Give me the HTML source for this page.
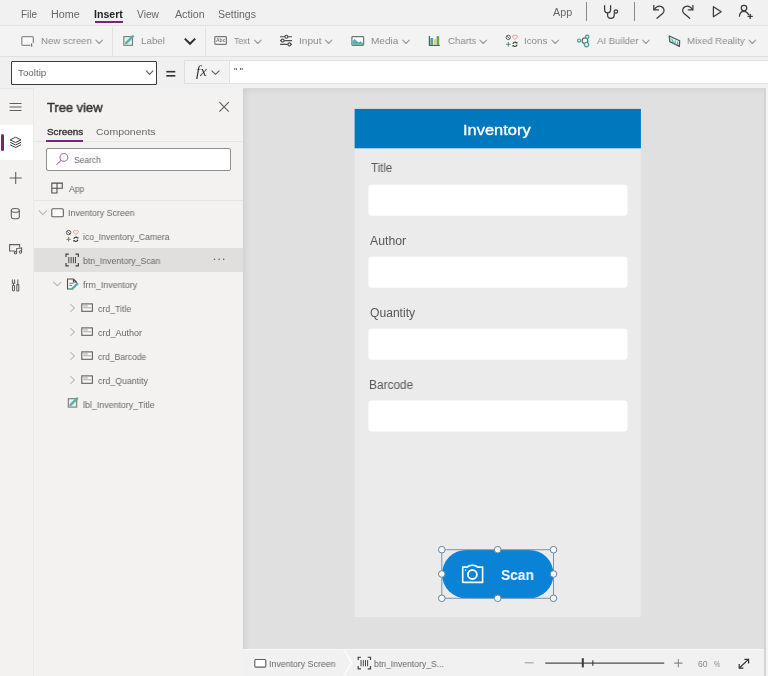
<!DOCTYPE html>
<html><head><meta charset="utf-8"><title>Power Apps Studio</title>
<style>
*{box-sizing:border-box;margin:0;padding:0}
html,body{width:768px;height:676px;overflow:hidden;background:#f3f2f1;font-family:"Liberation Sans",sans-serif;color:#605e5c}
.a{position:absolute}
.t{position:absolute;white-space:nowrap;line-height:1;transform-origin:0 0;will-change:transform}
svg{position:absolute;left:0;top:0;overflow:visible}
</style></head><body>
<div class="a" style="left:0;top:0;width:768px;height:25px;background:#f1f1f1"></div>
<div class="a" style="left:0;top:25px;width:768px;height:1px;background:#e2e2e2"></div>
<div class="a" style="left:0;top:26px;width:768px;height:30px;background:#f3f3f3"></div>
<div class="a" style="left:0;top:56px;width:768px;height:1px;background:#e0e0e0"></div>
<div class="a" style="left:0;top:57px;width:768px;height:31px;background:#f0f0f0"></div>
<div class="a" style="left:112px;top:27px;width:1px;height:29px;background:#e2e2e2"></div>
<div class="a" style="left:205px;top:27px;width:1px;height:29px;background:#e2e2e2"></div>
<div class="a" style="left:586px;top:2px;width:1px;height:19px;background:#8a8886"></div>
<div class="a" style="left:634px;top:2px;width:1px;height:19px;background:#8a8886"></div>
<div class="a" style="left:94.5px;top:21px;width:28.5px;height:2px;background:#742774"></div>
<!-- formula bar -->
<div class="a" style="left:11px;top:61px;width:146px;height:24px;background:#fff;border:1px solid #3b3a39;border-radius:1px"></div>
<div class="a" style="left:184px;top:60px;width:584px;height:24px;background:#fff;border-top:1px solid #e1dfdd;border-bottom:1px solid #e6e5e3"></div>
<div class="a" style="left:184px;top:60px;width:46px;height:24px;background:#f3f3f3;border:1px solid #e1dfdd"></div>
<div class="t" style="left:196px;top:63.5px;font-family:'Liberation Serif',serif;font-style:italic;font-size:15px;color:#323130">fx</div>
<div class="t" style="left:234.3px;top:66.5px;font-size:9px;color:#323130;letter-spacing:2.6px">""</div>
<!-- rail + tree -->
<div class="a" style="left:0;top:88px;width:33px;height:588px;background:#f3f2f1"></div>
<div class="a" style="left:0;top:88px;width:243px;height:1px;background:#e9e8e7"></div><div class="a" style="left:33px;top:89px;width:1px;height:587px;background:#eceae9"></div>
<div class="a" style="left:0;top:125px;width:33px;height:35px;background:#fff"></div>
<div class="a" style="left:1px;top:133.5px;width:3px;height:17px;background:#742774;border-radius:1.5px"></div>
<div class="a" style="left:34px;top:88px;width:209px;height:588px;background:#f3f2f1"></div>
<div class="a" style="left:34px;top:141px;width:209px;height:1px;background:#e6e5e3"></div>
<div class="a" style="left:46px;top:139.5px;width:37px;height:2px;background:#742774"></div>
<div class="a" style="left:46px;top:148px;width:185px;height:23px;background:#fff;border:1px solid #918f8d;border-radius:2px"></div>
<div class="a" style="left:34px;top:200px;width:209px;height:1px;background:#e6e5e3"></div>
<div class="a" style="left:34px;top:248px;width:209px;height:24px;background:#e1dfdd"></div>
<!-- canvas -->
<div class="a" style="left:243px;top:88px;width:521px;height:561px;background:#e0e0e0;box-shadow:inset 5px 5px 7px -4px rgba(0,0,0,0.10)"></div>
<div class="a" style="left:243px;top:88px;width:521px;height:1px;background:#d8d8d8"></div>
<div class="a" style="left:764px;top:88px;width:2px;height:588px;background:#d4d4d4"></div>
<div class="a" style="left:766px;top:88px;width:2px;height:588px;background:#f4f4f4"></div>
<div class="a" style="left:243px;top:649px;width:521px;height:27px;background:#f1f1f1;border-top:1px solid #f8f8f8"></div>
<svg width="768" height="676" viewBox="0 0 768 676">
<g fill="none" stroke="#3b3a39" stroke-width="1.25" stroke-linecap="round" stroke-linejoin="round">
<path d="M604.6 5.6 V9.6 A3 3.3 0 0 0 610.6 9.6 V5.6"/><path d="M607.6 13 V15 A3.3 3.3 0 0 0 614.2 15 V13.4"/><circle cx="615.9" cy="11.5" r="1.7"/>
<path d="M653.8 5.3 V9.9 H658.4"/><path d="M654.2 9.5 C656 7 659 5.6 661.5 6.6 C664.6 8 664.8 11.6 662.6 13.6 L657 18.3"/>
<path d="M692.9 5.3 V9.9 H688.3"/><path d="M692.5 9.5 C690.7 7 687.7 5.6 685.2 6.6 C682.1 8 681.9 11.6 684.1 13.6 L689.7 18.3"/>
<path d="M713.4 6.7 V16.8 L721.2 11.75 Z"/>
<circle cx="744" cy="8.1" r="2.75"/><path d="M739.4 16.2 C739.8 12.8 742 11.4 744 11.4 C746 11.4 747.6 12.6 748.6 14.6"/><path d="M748.2 16.4 H752.2 M750.2 14.4 V18.4" stroke-width="1.4"/>
</g>
<path d="M30.4 45.35 H22.9 A1.1 1.1 0 0 1 21.8 44.25 V37.75 A1.1 1.1 0 0 1 22.9 36.65 H32.2 A1.1 1.1 0 0 1 33.3 37.75 V43" fill="#fafafa" stroke="#8e8c8a" stroke-width="1.25"/>
<path d="M31.6 43.4 V46.6" stroke="#5d7a68" stroke-width="1.3"/>
<rect x="123.8" y="36.6" width="8.7" height="8.7" fill="#dff3f1" stroke="#7a7876" stroke-width="1.1"/><path d="M125.6 43.599999999999994 L133.6 35.7" stroke="#5aaea6" stroke-width="2.4" stroke-linecap="butt"/><path d="M124.89999999999999 44.3 L126.89999999999999 43.599999999999994 L125.6 42.3 Z" fill="#5aaea6"/>
<path d="M184.8 38.6 L190 43.8 L195.2 38.6" fill="none" stroke="#323130" stroke-width="2"/>
<rect x="214.8" y="36.6" width="11.6" height="7.8" rx="0.8" fill="#f6f6f6" stroke="#7a7876" stroke-width="1.2"/>
<g stroke="#4f4d4b" stroke-width="1.1" fill="#f3f2f1"><path d="M280 36.7 H292 M280 40.6 H292 M280 44.4 H292"/><circle cx="286.4" cy="36.7" r="1.5"/><circle cx="282.6" cy="40.6" r="1.5"/><circle cx="289.4" cy="44.4" r="1.5"/></g>
<rect x="351.9" y="36.6" width="11.7" height="8.8" rx="0.8" fill="#fbffff" stroke="#767472" stroke-width="1.2"/>
<path d="M352.5 41 L354.6 38.9 L358.6 42.4 L360.6 41.2 L363 43.2 V44.8 H352.5 Z" fill="#52b5aa"/>
<rect x="430.4" y="38" width="2.7" height="7.2" fill="#5b9fa0"/><rect x="433.9" y="39.4" width="2.1" height="5.8" fill="#d9cf85"/><rect x="436.6" y="36.2" width="2.6" height="9" fill="#6aa652"/>
<path d="M429.4 35.9 V45.5 H439.8" fill="none" stroke="#45605f" stroke-width="1.2"/>
<circle cx="508.3" cy="37.4" r="2.2" fill="none" stroke="#5a5856" stroke-width="0.95"/><path d="M506.90000000000003 36.0 L509.7 38.8" stroke="#5a5856" stroke-width="0.9"/><path d="M515 39.5 L512.6 37.1 A1.3 1.3 0 0 1 515 36.0 A1.3 1.3 0 0 1 517.4 37.1 Z" fill="none" stroke="#e49a8e" stroke-width="0.95"/><path d="M506.0 44.3 H510.6 M508.3 42.0 V46.599999999999994" stroke="#5f8a62" stroke-width="1"/><path d="M513 44.0 A2 2 0 0 1 516.6 43.0 M517 44.599999999999994 A2 2 0 0 1 513.4 45.599999999999994" fill="none" stroke="#3b3a39" stroke-width="1.1"/><path d="M517.5 41.699999999999996 V43.599999999999994 H515.6 Z M512.5 46.9 V45.0 H514.4 Z" fill="#3b3a39"/>
<g fill="none" stroke-width="1.2"><circle cx="585" cy="40.7" r="2.8" stroke="#66686a" fill="#f3f2f1"/><circle cx="579.1" cy="40.6" r="1.6" stroke="#4a9d95"/><circle cx="587.2" cy="36.8" r="1.7" stroke="#4a9d95" fill="#cfeeea"/><circle cx="586.5" cy="44.6" r="2.2" stroke="#4a9d95" fill="#d4f5f1"/></g>
<path d="M669.3 36 L679.7 40.8 L679.4 46.4 L669.8 41.6 Z" fill="#dff6f4" stroke="#44545b" stroke-width="1.2" stroke-linejoin="round"/>
<path d="M671.6 38.8 C672.4 40.6 673 42 673.8 43.4 M675.4 40.4 C674.8 42 675 43.6 676 44.6 M677.6 41.4 V45.2" fill="none" stroke="#58aaa2" stroke-width="1.1"/>
<path d="M95.9 40.2 L99.15 43.5 L102.4 40.2" fill="none" stroke="#9a9896" stroke-width="1.1" stroke-linecap="round" stroke-linejoin="round"/>
<path d="M254.6 40.2 L257.85 43.5 L261.1 40.2" fill="none" stroke="#9a9896" stroke-width="1.1" stroke-linecap="round" stroke-linejoin="round"/>
<path d="M325.4 40.2 L328.65 43.5 L331.9 40.2" fill="none" stroke="#9a9896" stroke-width="1.1" stroke-linecap="round" stroke-linejoin="round"/>
<path d="M402.7 40.2 L406.0 43.5 L409.3 40.2" fill="none" stroke="#9a9896" stroke-width="1.1" stroke-linecap="round" stroke-linejoin="round"/>
<path d="M479.9 40.2 L483.2 43.5 L486.5 40.2" fill="none" stroke="#9a9896" stroke-width="1.1" stroke-linecap="round" stroke-linejoin="round"/>
<path d="M551.9 40.2 L555.2 43.5 L558.5 40.2" fill="none" stroke="#9a9896" stroke-width="1.1" stroke-linecap="round" stroke-linejoin="round"/>
<path d="M642.6 40.2 L645.9000000000001 43.5 L649.2 40.2" fill="none" stroke="#9a9896" stroke-width="1.1" stroke-linecap="round" stroke-linejoin="round"/>
<path d="M749.1 40.2 L752.35 43.5 L755.6 40.2" fill="none" stroke="#9a9896" stroke-width="1.1" stroke-linecap="round" stroke-linejoin="round"/>
<path d="M146.3 70.9 L149.60000000000002 74.4 L152.9 70.9" fill="none" stroke="#605e5c" stroke-width="1.1" stroke-linecap="round" stroke-linejoin="round"/>
<rect x="166.3" y="70.9" width="9" height="1.6" fill="#323130"/><rect x="166.3" y="75" width="9" height="1.6" fill="#323130"/>
<path d="M211.9 70.9 L215.5 74.3 L219.1 70.9" fill="none" stroke="#605e5c" stroke-width="1.1" stroke-linecap="round" stroke-linejoin="round"/>
<path d="M9.6 103.5 H21.5 M9.6 107 H21.5 M9.6 110.5 H21.5" stroke="#605e5c" stroke-width="1.1"/>
<g fill="none" stroke="#3b3a39" stroke-width="1" stroke-linejoin="round"><path d="M15.6 137.2 L21 139.9 L15.6 142.6 L10.2 139.9 Z" fill="#fff"/><path d="M10.2 142.3 L15.6 145 L21 142.3"/><path d="M10.2 144.8 L15.6 147.5 L21 144.8"/></g>
<path d="M9.6 178 H21.8 M15.7 171.9 V184.1" stroke="#605e5c" stroke-width="1.1"/>
<g fill="none" stroke="#605e5c" stroke-width="1.05"><path d="M11.3 210.4 V217 C11.3 219.4 19.3 219.4 19.3 217 V210.4"/><ellipse cx="15.3" cy="210.4" rx="4" ry="1.8"/></g>
<g fill="none" stroke="#605e5c" stroke-width="1.05"><path d="M15 251 H9.6 V244.6 H19.6 V247.6"/><path d="M16.6 252.6 V248.6 L21.6 247.9 V251.8"/><circle cx="15.5" cy="252.8" r="1.2"/><circle cx="20.5" cy="252" r="1.2"/></g>
<g fill="none" stroke="#605e5c" stroke-width="1.05"><path d="M12.4 279.6 V283.2 H14.6 V279.6 M13.5 283.2 V285.2"/><rect x="12.5" y="285.2" width="2" height="5.8" rx="0.9"/><path d="M17.8 279.4 V284.6"/><rect x="16.8" y="284.6" width="2" height="6.4" rx="0.5"/></g>
<path d="M219.4 102.2 L228.8 111.6 M228.8 102.2 L219.4 111.6" stroke="#605e5c" stroke-width="1.1"/>
<g fill="none" stroke="#a877ae" stroke-width="1.15"><circle cx="63.9" cy="157.4" r="3.9"/><path d="M61.1 160.3 L56.5 164.6"/></g>
<path d="M51.8 183.1 H62.3 V188.2 H57 V193 H51.8 Z M57 183.1 V188.2 M51.8 188.2 H57" fill="none" stroke="#4f4d4b" stroke-width="1.05"/>
<path d="M39.2 210.9 L42.8 214.6 L46.4 210.9" fill="none" stroke="#b8b6b4" stroke-width="1.1" stroke-linecap="round" stroke-linejoin="round"/>
<rect x="51.8" y="208.8" width="11.5" height="8" rx="1" fill="#fff" stroke="#605e5c" stroke-width="1.1"/>
<circle cx="68.6" cy="232.6" r="2.2" fill="none" stroke="#5a5856" stroke-width="0.95"/><path d="M67.19999999999999 231.2 L70.0 234.0" stroke="#5a5856" stroke-width="0.9"/><path d="M75.9 234.7 L73.5 232.29999999999998 A1.3 1.3 0 0 1 75.9 231.2 A1.3 1.3 0 0 1 78.30000000000001 232.29999999999998 Z" fill="none" stroke="#e49a8e" stroke-width="0.95"/><path d="M66.3 239.3 H70.89999999999999 M68.6 237.0 V241.60000000000002" stroke="#5f8a62" stroke-width="1"/><path d="M73.9 239.0 A2 2 0 0 1 77.5 238.0 M77.9 239.60000000000002 A2 2 0 0 1 74.30000000000001 240.60000000000002" fill="none" stroke="#3b3a39" stroke-width="1.1"/><path d="M78.4 236.70000000000002 V238.60000000000002 H76.5 Z M73.4 241.9 V240.0 H75.30000000000001 Z" fill="#3b3a39"/>
<g fill="none" stroke="#403e3c" stroke-width="1.15"><path d="M68.8 254.1 H66 V256.9 M75.5 254.1 H78.3 V256.9 M66 263.0 V265.8 H68.8 M78.3 263.0 V265.8 H75.5"/></g><rect x="68.35" y="257.00" width="0.95" height="6.2" fill="#403e3c"/><rect x="70.65" y="257.00" width="0.95" height="6.2" fill="#403e3c"/><rect x="72.85" y="257.00" width="0.95" height="6.2" fill="#403e3c"/><rect x="74.95" y="257.00" width="0.95" height="6.2" fill="#403e3c"/>
<path d="M53.5 282.1 L57.25 285.7 L61 282.1" fill="none" stroke="#bdbbb9" stroke-width="1.2" stroke-linecap="round" stroke-linejoin="round"/>
<path d="M73.4 278.9 H67.5 V289 H72 M73.4 278.9 L76.4 282 V283.6 M73.4 278.9 V282 H76.4" fill="none" stroke="#4f4d4b" stroke-width="1.05"/>
<path d="M69.3 283.4 H73.4 M69.3 285.5 H72" stroke="#7a7876" stroke-width="0.9"/>
<path d="M71.6 289.4 L78 283.2" stroke="#4db0a8" stroke-width="2.2"/>
<path d="M70.6 304.4 L74.4 308.0 L70.6 311.6" fill="none" stroke="#c2c0be" stroke-width="1.2" stroke-linecap="round" stroke-linejoin="round"/>
<rect x="81.8" y="303.90000000000003" width="10.6" height="7.4" fill="#f8f8f8" stroke="#605e5c" stroke-width="1.1"/><path d="M83.2 305.90000000000003 H87.7" stroke="#a19f9d" stroke-width="0.9"/><path d="M83.2 307.8 H91.2" stroke="#a19f9d" stroke-width="0.9"/>
<path d="M70.6 328.4 L74.4 332.0 L70.6 335.6" fill="none" stroke="#c2c0be" stroke-width="1.2" stroke-linecap="round" stroke-linejoin="round"/>
<rect x="81.8" y="327.90000000000003" width="10.6" height="7.4" fill="#f8f8f8" stroke="#605e5c" stroke-width="1.1"/><path d="M83.2 329.90000000000003 H87.7" stroke="#a19f9d" stroke-width="0.9"/><path d="M83.2 331.8 H91.2" stroke="#a19f9d" stroke-width="0.9"/>
<path d="M70.6 352.4 L74.4 356.0 L70.6 359.6" fill="none" stroke="#c2c0be" stroke-width="1.2" stroke-linecap="round" stroke-linejoin="round"/>
<rect x="81.8" y="351.90000000000003" width="10.6" height="7.4" fill="#f8f8f8" stroke="#605e5c" stroke-width="1.1"/><path d="M83.2 353.90000000000003 H87.7" stroke="#a19f9d" stroke-width="0.9"/><path d="M83.2 355.8 H91.2" stroke="#a19f9d" stroke-width="0.9"/>
<path d="M70.6 376.4 L74.4 380.0 L70.6 383.6" fill="none" stroke="#c2c0be" stroke-width="1.2" stroke-linecap="round" stroke-linejoin="round"/>
<rect x="81.8" y="375.90000000000003" width="10.6" height="7.4" fill="#f8f8f8" stroke="#605e5c" stroke-width="1.1"/><path d="M83.2 377.90000000000003 H87.7" stroke="#a19f9d" stroke-width="0.9"/><path d="M83.2 379.8 H91.2" stroke="#a19f9d" stroke-width="0.9"/>
<rect x="68.3" y="398.7" width="8.4" height="8.4" fill="#dff3f1" stroke="#7a7876" stroke-width="1.1"/><path d="M70.1 405.4 L77.8 397.8" stroke="#5aaea6" stroke-width="2.4" stroke-linecap="butt"/><path d="M69.39999999999999 406.09999999999997 L71.39999999999999 405.4 L70.1 404.09999999999997 Z" fill="#5aaea6"/>
<circle cx="214.5" cy="259.3" r="0.8" fill="#605e5c"/>
<circle cx="219.1" cy="259.3" r="0.8" fill="#605e5c"/>
<circle cx="223.7" cy="259.3" r="0.8" fill="#605e5c"/>
<rect x="354.6" y="108.9" width="286.3" height="508.1" fill="#ebebeb"/>
<rect x="354.6" y="108.9" width="286.3" height="39.4" fill="#0078be"/>
<rect x="368.5" y="184.8" width="259" height="30.9" rx="3" fill="#fff"/>
<rect x="368.5" y="256.8" width="259" height="30.9" rx="3" fill="#fff"/>
<rect x="368.5" y="328.8" width="259" height="30.9" rx="3" fill="#fff"/>
<rect x="368.5" y="400.6" width="259" height="30.9" rx="3" fill="#fff"/>
<rect x="442" y="550" width="111.5" height="48.3" rx="24.15" fill="#0a83d7"/>
<g fill="none" stroke="#fff" stroke-width="1.6" stroke-linejoin="round"><path d="M462.7 582.4 V567.1 H467.4 C468.6 565.2 470 565.2 472.4 565.2 C474.8 565.2 476.2 565.2 477.4 567.1 H482.6 V582.4 Z"/><circle cx="472.4" cy="574.5" r="4.5" stroke-width="1.8"/></g><circle cx="465.6" cy="570.1" r="0.8" fill="#fff"/>
<rect x="441.8" y="549.7" width="111.7" height="48.6" fill="none" stroke="#7d93ab" stroke-width="1"/>
<circle cx="441.8" cy="549.7" r="3.3" fill="#f4fdff" stroke="#6b8199" stroke-width="1"/>
<circle cx="497.7" cy="549.7" r="3.3" fill="#f4fdff" stroke="#6b8199" stroke-width="1"/>
<circle cx="553.5" cy="549.7" r="3.3" fill="#f4fdff" stroke="#6b8199" stroke-width="1"/>
<circle cx="441.8" cy="574" r="3.3" fill="#f4fdff" stroke="#6b8199" stroke-width="1"/>
<circle cx="553.5" cy="574" r="3.3" fill="#f4fdff" stroke="#6b8199" stroke-width="1"/>
<circle cx="441.8" cy="598.3" r="3.3" fill="#f4fdff" stroke="#6b8199" stroke-width="1"/>
<circle cx="497.7" cy="598.3" r="3.3" fill="#f4fdff" stroke="#6b8199" stroke-width="1"/>
<circle cx="553.5" cy="598.3" r="3.3" fill="#f4fdff" stroke="#6b8199" stroke-width="1"/>
<rect x="254.8" y="659.5" width="11" height="7.6" rx="1" fill="#fff" stroke="#605e5c" stroke-width="1.1"/>
<path d="M343.8 649.5 L351.6 662.6 L343.8 676" fill="none" stroke="#fbfbfb" stroke-width="1.6"/>
<g fill="none" stroke="#403e3c" stroke-width="1.15"><path d="M361.0 657.2 H358.2 V660.0 M367.7 657.2 H370.5 V660.0 M358.2 666.1000000000001 V668.9000000000001 H361.0 M370.5 666.1000000000001 V668.9000000000001 H367.7"/></g><rect x="360.55" y="660.10" width="0.95" height="6.2" fill="#403e3c"/><rect x="362.85" y="660.10" width="0.95" height="6.2" fill="#403e3c"/><rect x="365.05" y="660.10" width="0.95" height="6.2" fill="#403e3c"/><rect x="367.15" y="660.10" width="0.95" height="6.2" fill="#403e3c"/>
<path d="M524.7 662.8 H533.7" stroke="#a19f9d" stroke-width="1.1"/>
<path d="M545.3 663.2 H664.2" stroke="#4f4d4b" stroke-width="1.3"/>
<rect x="581.8" y="658.2" width="2" height="9.2" fill="#3b3a39"/><rect x="592.3" y="660.3" width="1.1" height="5.5" fill="#3b3a39"/>
<path d="M674.2 663.1 H682.5 M678.35 659 V667.3" stroke="#8a8886" stroke-width="1.1"/>
<g stroke="#323130" stroke-width="1.2" fill="none"><path d="M739.6 667.8 L748.2 659.6"/><path d="M744.4 659.3 H748.6 V663.5"/><path d="M739.2 664 V668.2 H743.4"/></g>
</svg>
<div class="t" style="left:216.3px;top:38.1px;font-size:5px;font-weight:bold;color:#7a7876;transform:scaleX(0.95)">Abc</div>
<div class="t" style="left:20.55px;top:10px;font-size:10px;color:#696765;transform:scaleX(1.0000);">File</div>
<div class="t" style="left:50.89px;top:10px;font-size:10px;color:#696765;transform:scaleX(1.0784);">Home</div>
<div class="t" style="left:93.91px;top:10px;font-size:10px;font-weight:bold;color:#252423;transform:scaleX(1.0590);">Insert</div>
<div class="t" style="left:137.24px;top:10px;font-size:10px;color:#696765;transform:scaleX(1.0212);">View</div>
<div class="t" style="left:174.70px;top:10px;font-size:10px;color:#696765;transform:scaleX(1.0679);">Action</div>
<div class="t" style="left:218.28px;top:10px;font-size:10px;color:#696765;transform:scaleX(1.0496);">Settings</div>
<div class="t" style="left:552.50px;top:8px;font-size:10px;color:#696765;transform:scaleX(1.0743);">App</div>
<div class="t" style="left:40.96px;top:36px;font-size:9.8px;color:#8d8b89;transform:scaleX(0.9851);">New screen</div>
<div class="t" style="left:141.25px;top:36px;font-size:9.8px;color:#8d8b89;transform:scaleX(1.0000);">Label</div>
<div class="t" style="left:234.48px;top:36px;font-size:9.8px;color:#8d8b89;transform:scaleX(0.8789);">Text</div>
<div class="t" style="left:299.27px;top:36px;font-size:9.8px;color:#8d8b89;transform:scaleX(1.0313);">Input</div>
<div class="t" style="left:370.93px;top:36px;font-size:9.8px;color:#8d8b89;transform:scaleX(1.0231);">Media</div>
<div class="t" style="left:447.51px;top:36px;font-size:9.8px;color:#8d8b89;transform:scaleX(0.9821);">Charts</div>
<div class="t" style="left:524.31px;top:36px;font-size:9.8px;color:#8d8b89;transform:scaleX(0.9864);">Icons</div>
<div class="t" style="left:597.00px;top:36px;font-size:9.8px;color:#8d8b89;transform:scaleX(0.9775);">AI Builder</div>
<div class="t" style="left:687.27px;top:36px;font-size:9.8px;color:#8d8b89;transform:scaleX(0.9776);">Mixed Reality</div>
<div class="t" style="left:18.24px;top:68px;font-size:9.5px;color:#696765;transform:scaleX(1.0280);">Tooltip</div>
<div class="t" style="left:46.76px;top:101px;font-size:13.2px;color:#323130;transform:scaleX(0.9788);-webkit-text-stroke:0.45px #323130;">Tree view</div>
<div class="t" style="left:46.50px;top:127px;font-size:9.8px;color:#323130;transform:scaleX(1.0086);-webkit-text-stroke:0.35px #323130;">Screens</div>
<div class="t" style="left:96.46px;top:127px;font-size:9.8px;color:#696765;transform:scaleX(1.0721);">Components</div>
<div class="t" style="left:73.52px;top:156px;font-size:8.8px;color:#696765;transform:scaleX(0.9645);">Search</div>
<div class="t" style="left:69.00px;top:185px;font-size:9px;color:#696765;transform:scaleX(0.9524);">App</div>
<div class="t" style="left:68.27px;top:209px;font-size:9px;color:#696765;transform:scaleX(0.9783);">Inventory Screen</div>
<div class="t" style="left:83.22px;top:233px;font-size:9px;color:#696765;transform:scaleX(0.9556);">ico_Inventory_Camera</div>
<div class="t" style="left:83.22px;top:257px;font-size:9px;color:#696765;transform:scaleX(0.9658);">btn_Inventory_Scan</div>
<div class="t" style="left:83.45px;top:281px;font-size:9px;color:#696765;transform:scaleX(0.9863);">frm_Inventory</div>
<div class="t" style="left:98.21px;top:305px;font-size:9px;color:#696765;transform:scaleX(0.9714);">crd_Title</div>
<div class="t" style="left:98.21px;top:329px;font-size:9px;color:#696765;transform:scaleX(0.9896);">crd_Author</div>
<div class="t" style="left:98.23px;top:353px;font-size:9px;color:#696765;transform:scaleX(0.9460);">crd_Barcode</div>
<div class="t" style="left:98.21px;top:377px;font-size:9px;color:#696765;transform:scaleX(0.9802);">crd_Quantity</div>
<div class="t" style="left:83.21px;top:401px;font-size:9px;color:#696765;transform:scaleX(0.9840);">lbl_Inventory_Title</div>
<div class="t" style="left:463.11px;top:122px;font-size:15.5px;color:#fff;transform:scaleX(1.0618);-webkit-text-stroke:0.35px #fff;">Inventory</div>
<div class="t" style="left:370.56px;top:162px;font-size:12px;color:#585858;transform:scaleX(0.9535);">Title</div>
<div class="t" style="left:370.30px;top:235px;font-size:12px;color:#585858;transform:scaleX(1.0213);">Author</div>
<div class="t" style="left:369.80px;top:307px;font-size:12px;color:#585858;transform:scaleX(1.0091);">Quantity</div>
<div class="t" style="left:369.31px;top:379px;font-size:12px;color:#585858;transform:scaleX(0.9873);">Barcode</div>
<div class="t" style="left:500.81px;top:568px;font-size:14px;font-weight:bold;color:#fff;transform:scaleX(0.9813);">Scan</div>
<div class="t" style="left:269.27px;top:660px;font-size:9px;color:#696765;transform:scaleX(0.9768);">Inventory Screen</div>
<div class="t" style="left:373.72px;top:660px;font-size:9px;color:#696765;transform:scaleX(0.9589);">btn_Inventory_S...</div>
<div class="t" style="left:698.20px;top:660px;font-size:8.7px;color:#8a8886;transform:scaleX(1.0057);">60</div>
<div class="t" style="left:714.00px;top:660px;font-size:8.7px;color:#8a8886;transform:scaleX(0.8000);">%</div>
</body></html>
